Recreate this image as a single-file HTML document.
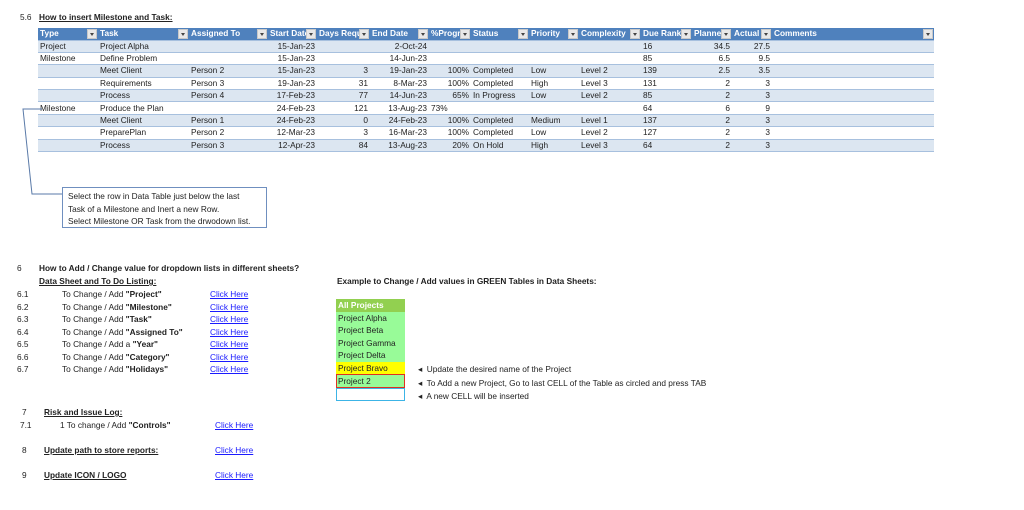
<!DOCTYPE html>
<html><head><meta charset="utf-8"><style>
*{margin:0;padding:0;box-sizing:border-box}
body{width:1024px;height:510px;background:#fff;position:relative;overflow:hidden;font-family:"Liberation Sans",sans-serif;font-size:8.3px;color:#222}
.a{position:absolute;white-space:nowrap;line-height:10px}
.b{font-weight:bold}
.u{text-decoration:underline}
.lk{color:#1a1aff;text-decoration:underline}
table{position:absolute;left:38px;top:28px;border-collapse:collapse;table-layout:fixed;width:896px}
td{height:12.4px;padding:0 2px;white-space:nowrap;overflow:hidden;font-size:8.3px;line-height:11px;border-top:1px solid #a7c0de}
tr.h td{background:#4f81bd;color:#fff;font-weight:bold;position:relative;height:12px;border:none}
tr.s td{background:#dce6f1}
td.r{text-align:right}
.dd{position:absolute;right:1px;top:1px;width:10px;height:10px;background:#e8e8e8;border:1px solid #c8c8c8}
.dd:after{content:"";position:absolute;left:2px;top:3px;border-left:2.5px solid transparent;border-right:2.5px solid transparent;border-top:3px solid #444}
.g{position:absolute;left:336px;width:69px;height:12.5px;background:#98fb98;padding-left:2px;line-height:12px;font-size:8.3px}
</style></head><body>
<div class="a" style="left:20px;top:12px">5.6</div>
<div class="a b u" style="left:39px;top:12px">How to insert Milestone and Task:</div>
<table>
<colgroup><col style="width:60px"><col style="width:91px"><col style="width:79px"><col style="width:49px"><col style="width:53px"><col style="width:59px"><col style="width:42px"><col style="width:58px"><col style="width:50px"><col style="width:62px"><col style="width:51px"><col style="width:40px"><col style="width:40px"><col style="width:162px"></colgroup>
<tr class="h"><td>Type<span class="dd"></span></td><td>Task<span class="dd"></span></td><td>Assigned To<span class="dd"></span></td><td>Start Date<span class="dd"></span></td><td>Days Requ<span class="dd"></span></td><td>End Date<span class="dd"></span></td><td>%Progre<span class="dd"></span></td><td>Status<span class="dd"></span></td><td>Priority<span class="dd"></span></td><td>Complexity<span class="dd"></span></td><td>Due Rank<span class="dd"></span></td><td>Planne<span class="dd"></span></td><td>Actual<span class="dd"></span></td><td>Comments<span class="dd"></span></td></tr>
<tr class="s"><td>Project</td><td>Project Alpha</td><td></td><td class="r">15-Jan-23</td><td></td><td class="r">2-Oct-24</td><td></td><td></td><td></td><td></td><td>16</td><td class="r">34.5</td><td class="r">27.5</td><td></td></tr>
<tr><td>Milestone</td><td>Define Problem</td><td></td><td class="r">15-Jan-23</td><td></td><td class="r">14-Jun-23</td><td></td><td></td><td></td><td></td><td>85</td><td class="r">6.5</td><td class="r">9.5</td><td></td></tr>
<tr class="s"><td></td><td>Meet Client</td><td>Person 2</td><td class="r">15-Jan-23</td><td class="r">3</td><td class="r">19-Jan-23</td><td class="r">100%</td><td>Completed</td><td>Low</td><td>Level 2</td><td>139</td><td class="r">2.5</td><td class="r">3.5</td><td></td></tr>
<tr><td></td><td>Requirements</td><td>Person 3</td><td class="r">19-Jan-23</td><td class="r">31</td><td class="r">8-Mar-23</td><td class="r">100%</td><td>Completed</td><td>High</td><td>Level 3</td><td>131</td><td class="r">2</td><td class="r">3</td><td></td></tr>
<tr class="s"><td></td><td>Process</td><td>Person 4</td><td class="r">17-Feb-23</td><td class="r">77</td><td class="r">14-Jun-23</td><td class="r">65%</td><td>In Progress</td><td>Low</td><td>Level 2</td><td>85</td><td class="r">2</td><td class="r">3</td><td></td></tr>
<tr><td>Milestone</td><td>Produce the Plan</td><td></td><td class="r">24-Feb-23</td><td class="r">121</td><td class="r">13-Aug-23</td><td>73%</td><td></td><td></td><td></td><td>64</td><td class="r">6</td><td class="r">9</td><td></td></tr>
<tr class="s"><td></td><td>Meet Client</td><td>Person 1</td><td class="r">24-Feb-23</td><td class="r">0</td><td class="r">24-Feb-23</td><td class="r">100%</td><td>Completed</td><td>Medium</td><td>Level 1</td><td>137</td><td class="r">2</td><td class="r">3</td><td></td></tr>
<tr><td></td><td>PreparePlan</td><td>Person 2</td><td class="r">12-Mar-23</td><td class="r">3</td><td class="r">16-Mar-23</td><td class="r">100%</td><td>Completed</td><td>Low</td><td>Level 2</td><td>127</td><td class="r">2</td><td class="r">3</td><td></td></tr>
<tr class="s"><td style="border-bottom:1px solid #a7c0de"></td><td style="border-bottom:1px solid #a7c0de">Process</td><td style="border-bottom:1px solid #a7c0de">Person 3</td><td class="r" style="border-bottom:1px solid #a7c0de">12-Apr-23</td><td class="r" style="border-bottom:1px solid #a7c0de">84</td><td class="r" style="border-bottom:1px solid #a7c0de">13-Aug-23</td><td class="r" style="border-bottom:1px solid #a7c0de">20%</td><td style="border-bottom:1px solid #a7c0de">On Hold</td><td style="border-bottom:1px solid #a7c0de">High</td><td style="border-bottom:1px solid #a7c0de">Level 3</td><td style="border-bottom:1px solid #a7c0de">64</td><td class="r" style="border-bottom:1px solid #a7c0de">2</td><td class="r" style="border-bottom:1px solid #a7c0de">3</td><td style="border-bottom:1px solid #a7c0de"></td></tr>
</table>
<svg style="position:absolute;left:0;top:0" width="300" height="240"><polyline points="42,109 23,109 32,194 62,194" fill="none" stroke="#5a7aa8" stroke-width="1"/></svg>
<div style="position:absolute;left:62px;top:187px;width:205px;height:41px;border:1px solid #6f8fbf;background:#fff"></div>
<div class="a" style="left:68px;top:190px;line-height:12.5px">Select the row in Data Table just below the last<br>Task of a Milestone and Inert a new Row.<br>Select Milestone OR Task from the drwodown list.</div>

<div class="a" style="left:17px;top:263px">6</div>
<div class="a b" style="left:39px;top:263px">How to Add / Change value for dropdown lists in different sheets?</div>
<div class="a b u" style="left:39px;top:276px">Data Sheet and To Do Listing:</div>
<div class="a" style="left:17px;top:288px;line-height:12.5px">6.1<br>6.2<br>6.3<br>6.4<br>6.5<br>6.6<br>6.7</div>
<div class="a" style="left:62px;top:288px;line-height:12.5px">To Change / Add <b>"Project"</b><br>To Change / Add <b>"Milestone"</b><br>To Change / Add <b>"Task"</b><br>To Change / Add <b>"Assigned To"</b><br>To Change / Add a <b>"Year"</b><br>To Change / Add <b>"Category"</b><br>To Change / Add <b>"Holidays"</b></div>
<div class="a lk" style="left:210px;top:288px;line-height:12.5px">Click Here<br>Click Here<br>Click Here<br>Click Here<br>Click Here<br>Click Here<br>Click Here</div>

<div class="a" style="left:22px;top:407px">7</div>
<div class="a b u" style="left:44px;top:407px">Risk and Issue Log:</div>
<div class="a" style="left:20px;top:420px">7.1</div>
<div class="a" style="left:60px;top:420px">1 To change / Add <b>"Controls"</b></div>
<div class="a lk" style="left:215px;top:420px">Click Here</div>
<div class="a" style="left:22px;top:445px">8</div>
<div class="a b u" style="left:44px;top:445px">Update path to store reports:</div>
<div class="a lk" style="left:215px;top:445px">Click Here</div>
<div class="a" style="left:22px;top:470px">9</div>
<div class="a b u" style="left:44px;top:470px">Update ICON / LOGO</div>
<div class="a lk" style="left:215px;top:470px">Click Here</div>

<div class="a b" style="left:337px;top:276px">Example to Change / Add values in GREEN Tables in Data Sheets:</div>
<div class="g b" style="top:299px;background:#92d050;color:#fff">All Projects</div>
<div class="g" style="top:311.5px">Project Alpha</div>
<div class="g" style="top:324px">Project Beta</div>
<div class="g" style="top:336.5px">Project Gamma</div>
<div class="g" style="top:349px">Project Delta</div>
<div class="g" style="top:361.5px;background:#ffff00">Project Bravo</div>
<div class="g" style="top:374px;height:13.5px;border:1px solid #e03020;padding-left:1px">Project 2</div>
<div class="g" style="top:387.5px;height:13.5px;background:#fff;border:1px solid #3cb4e6"></div>
<div class="a" style="left:418px;top:363px;line-height:13.5px">◂&nbsp; Update the desired name of the Project<br>◂&nbsp; To Add a new Project, Go to last CELL of the Table as circled and press TAB<br>◂&nbsp; A new CELL will be inserted</div>
</body></html>
